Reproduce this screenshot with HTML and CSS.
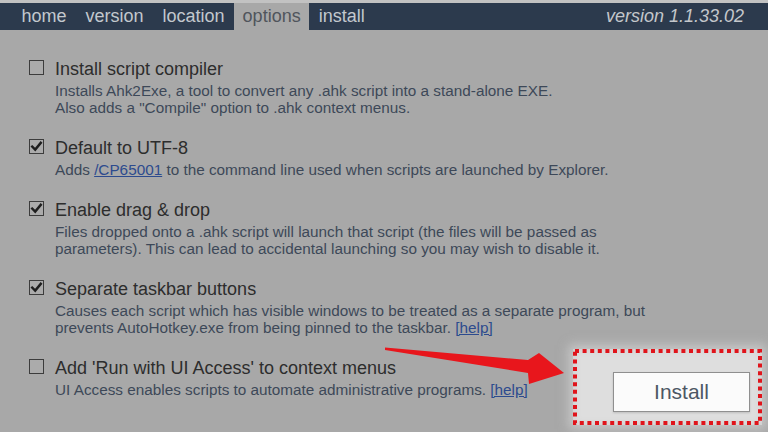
FILE: index.html
```html
<!DOCTYPE html>
<html>
<head>
<meta charset="utf-8">
<link rel="stylesheet" href="styles.css">
</head>
<body>
<div class="page">
  <header class="topbar">
    <nav class="tabs">
      <span class="tab">home</span>
      <span class="tab">version</span>
      <span class="tab">location</span>
      <span class="tab active">options</span>
      <span class="tab">install</span>
    </nav>
    <span class="ver">version 1.1.33.02</span>
  </header>

  <main class="options">
    <div class="opt">
      <span class="cb"></span>
      <div class="txt">
        <div class="label">Install script compiler</div>
        <div class="desc">Installs Ahk2Exe, a tool to convert any .ahk script into a stand-alone EXE.<br>Also adds a "Compile" option to .ahk context menus.</div>
      </div>
    </div>

    <div class="opt">
      <span class="cb checked"><svg viewBox="0 0 15 15"><path d="M3.2 7.6 L6.2 10.6 L11.8 3.8" /></svg></span>
      <div class="txt">
        <div class="label">Default to UTF-8</div>
        <div class="desc">Adds <a class="link">/CP65001</a> to the command line used when scripts are launched by Explorer.</div>
      </div>
    </div>

    <div class="opt">
      <span class="cb checked"><svg viewBox="0 0 15 15"><path d="M3.2 7.6 L6.2 10.6 L11.8 3.8" /></svg></span>
      <div class="txt">
        <div class="label">Enable drag &amp; drop</div>
        <div class="desc">Files dropped onto a .ahk script will launch that script (the files will be passed as<br>parameters). This can lead to accidental launching so you may wish to disable it.</div>
      </div>
    </div>

    <div class="opt">
      <span class="cb checked"><svg viewBox="0 0 15 15"><path d="M3.2 7.6 L6.2 10.6 L11.8 3.8" /></svg></span>
      <div class="txt">
        <div class="label">Separate taskbar buttons</div>
        <div class="desc">Causes each script which has visible windows to be treated as a separate program, but<br>prevents AutoHotkey.exe from being pinned to the taskbar. <a class="link">[help]</a></div>
      </div>
    </div>

    <div class="opt last">
      <span class="cb"></span>
      <div class="txt">
        <div class="label">Add 'Run with UI Access' to context menus</div>
        <div class="desc">UI Access enables scripts to automate administrative programs. <a class="link">[help]</a></div>
      </div>
      <div class="install-area">
        <svg class="dots" width="189" height="76" viewBox="0 0 189 76"><rect x="2" y="2" width="185" height="72" /></svg>
        <button class="install-btn">Install</button>
      </div>
    </div>
  </main>

  <svg class="arrow" width="190" height="50" viewBox="0 0 190 50">
    <polygon points="5,7.5 148,20 159,13 184,33 149,44 148,33 5,10" />
  </svg>
</div>
</body>
</html>
```

FILE: styles.css
```css
html, body {
  margin: 0;
  padding: 0;
}

body {
  background: #a8a8a8;
  font-family: "Liberation Sans", Arial, sans-serif;
  width: 768px;
  height: 432px;
  overflow: hidden;
}

.page {
  position: relative;
  width: 768px;
  height: 432px;
  background: #a8a8a8;
}

.topbar {
  display: flex;
  justify-content: space-between;
  align-items: stretch;
  height: 27px;
  border-top: 3px solid #c2c2c2;
  background: #2c3a4d;
}

.tabs {
  display: flex;
  padding-left: 12px;
}

.tab {
  padding: 0 9.5px;
  font-size: 18px;
  line-height: 27px;
  color: #c3c8ce;
}

.tab.active {
  padding: 0 8.5px;
  background: #a8a8a8;
  color: #50555c;
}

.ver {
  padding-right: 24px;
  font-size: 18px;
  line-height: 27px;
  font-style: italic;
  color: #c4c7cb;
}

.options {
  display: flex;
  flex-direction: column;
  gap: 21px;
  padding: 28px 6px 0 28px;
}

.opt {
  display: flex;
  align-items: flex-start;
}

.cb {
  flex: none;
  width: 13px;
  height: 13px;
  margin-top: 2px;
  margin-left: 1px;
  margin-right: 11px;
  border: 1px solid #3c3c3c;
  background: #ababab;
}

.cb svg {
  display: block;
  width: 15px;
  height: 15px;
  margin: -1px 0 0 -1px;
}

.cb svg path {
  fill: none;
  stroke: #1e1e1e;
  stroke-width: 2.4;
  stroke-linecap: square;
  stroke-linejoin: miter;
}

.label {
  font-size: 18px;
  line-height: 22px;
  color: #2d2d2d;
}

.desc {
  margin-top: 2px;
  font-size: 15.3px;
  line-height: 17px;
  color: #3d4858;
  white-space: nowrap;
}

.link {
  color: #2d4b8e;
  text-decoration: underline;
}

.install-area {
  position: relative;
  flex: none;
  margin-left: auto;
  margin-top: -8px;
  width: 137px;
  height: 40px;
  padding: 23px 12px 13px 40px;
  background: #dedede;
  box-shadow: 0 0 10px 4px rgba(225, 225, 225, 0.55), inset 0 0 10px rgba(0, 0, 0, 0.08);
}

.dots {
  position: absolute;
  left: 0;
  top: 0;
}

.dots rect {
  fill: none;
  stroke: #e0141b;
  stroke-width: 4;
  stroke-dasharray: 4 3.6;
}

.install-btn {
  display: block;
  width: 137px;
  height: 40px;
  margin: 0;
  padding: 0;
  background: #fbfbfb;
  border: 1px solid #8f8f8f;
  font-family: "Liberation Sans", Arial, sans-serif;
  font-size: 21px;
  color: #4d5764;
  box-shadow: 0 1px 2px rgba(0, 0, 0, 0.15);
}

.arrow {
  position: absolute;
  left: 380px;
  top: 340px;
}

.arrow polygon {
  fill: #e8161c;
}
```
